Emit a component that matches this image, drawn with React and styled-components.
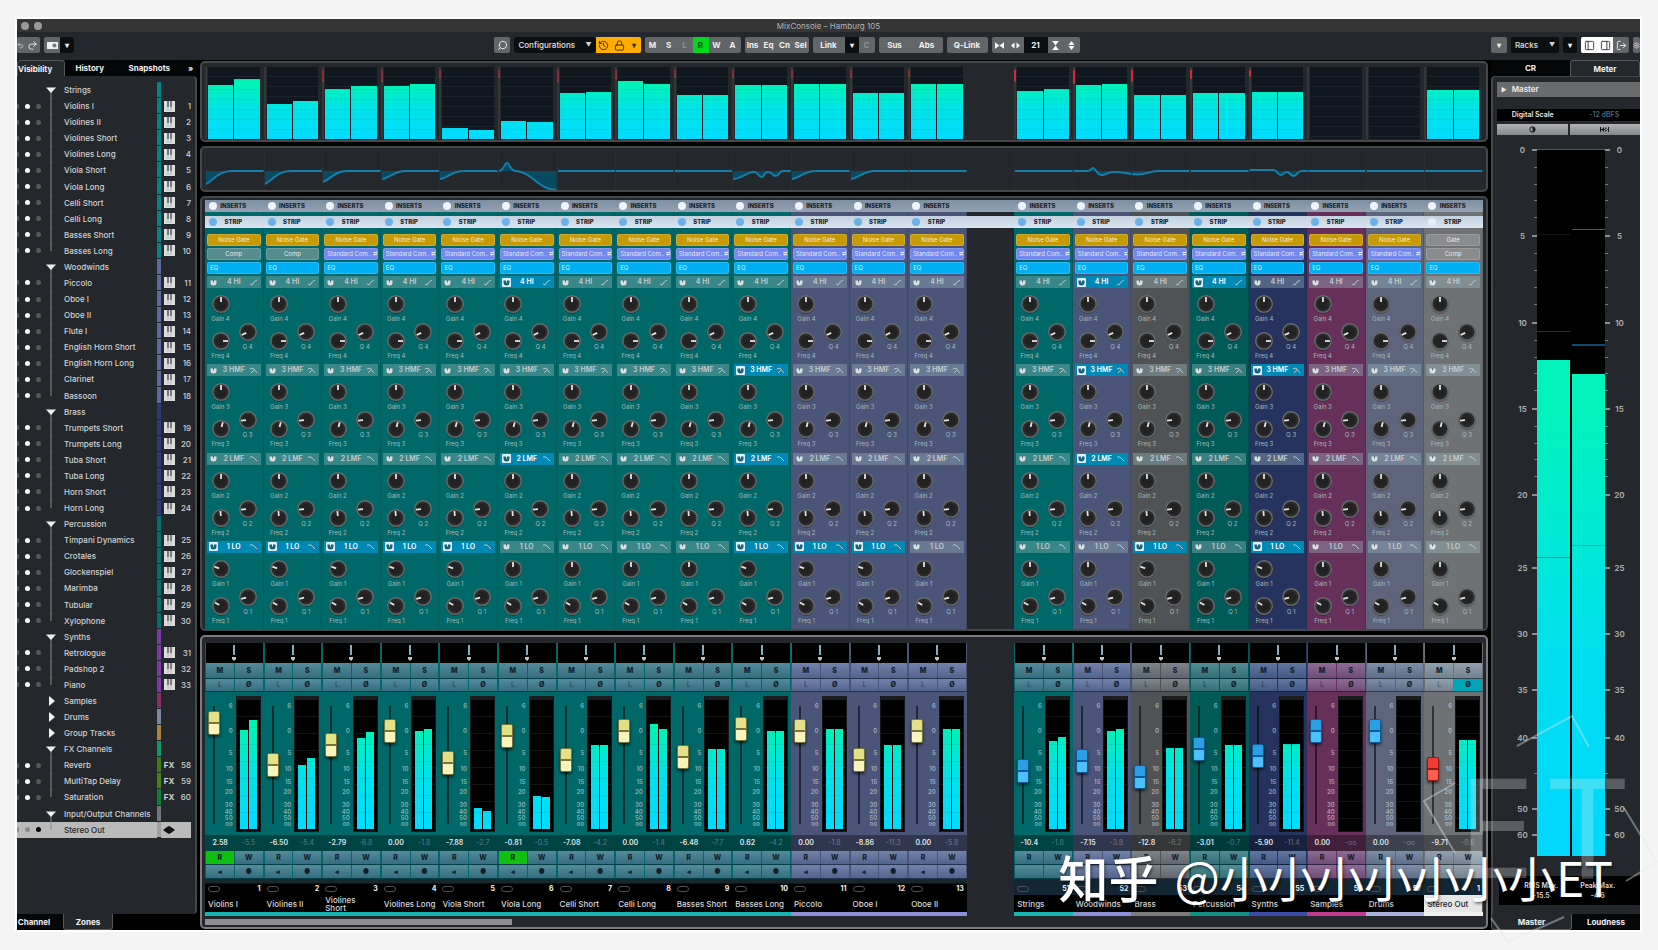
import React, { useState } from 'react';
import styled, { createGlobalStyle, css } from 'styled-components';
import { Search, Redo2, Undo2, PanelLeft, PanelRight, LogOut, Settings, History, Lock } from 'lucide-react';

const GlobalStyle = createGlobalStyle`
    * { box-sizing: border-box; }
    body {
        margin: 0;
        background: #f4f4f4;
        font-family: Inter, "Liberation Sans", sans-serif;
        font-size: 8px;
        line-height: 10px;
        color: #d4d6d8;
    }
    button, input, select { font: inherit; color: inherit; margin: 0; padding: 0; border: 0; }
`;

const Page = styled.div`
    position: relative;
    min-height: 100vh;
    display: flex;
    flex-direction: column;
    padding: 19px 18px 20px 17px;
    overflow: hidden;
`;
const Window = styled.div`
    flex: 1;
    display: flex;
    flex-direction: column;
    background: #000;
    box-shadow: 0 0 0 2px #fff;
    overflow: hidden;
`;

/* title bar and toolbar */
const TitleBar = styled.header`
    position: relative;
    display: flex;
    align-items: center;
    justify-content: center;
    height: 13px;
    background: #353535;
    color: #b4b4b4;
`;
const Lights = styled.div`
    position: absolute;
    left: 4px;
    display: flex;
    gap: 5px;
`;
const Light = styled.span`
    width: 8px;
    height: 8px;
    border-radius: 50%;
    background: #9a9a9a;
`;
const Toolbar = styled.div`
    display: flex;
    align-items: center;
    justify-content: space-between;
    height: 28px;
    padding-bottom: 2px;
    background: #24282c;
`;
const ToolSide = styled.div`
    display: flex;
    align-items: center;
    gap: 4px;
    padding-right: ${props => props.$pad || 0}px;
`;
const ToolGroup = styled.div`
    display: flex;
    height: 16px;
    border-radius: 2px;
    overflow: hidden;
    background: ${props => props.$bg || '#636669'};
`;
const ToolButton = styled.button`
    display: flex;
    align-items: center;
    justify-content: center;
    width: ${props => props.$w || 16}px;
    background: ${props => props.$bg || 'transparent'};
    color: ${props => props.$color || '#f0f0f0'};
    font-weight: 700;
    svg { width: 11px; height: 11px; }
`;
const ToolSelect = styled.select`
    width: ${props => props.$w}px;
    height: 16px;
    padding: 0 4px;
    background: #0c0f11;
    appearance: none;
    border-radius: 2px;
    color: #e2e2e2;
    font-weight: 500;
`;
const SelectBox = styled.label`
    display: flex;
    align-items: center;
    background: #0c0f11;
    border-radius: 2px;
    font-size: 6px;
    padding-right: 4px;
    select { font-size: 8px; }
`;

const Body = styled.div`
    flex: 1;
    display: flex;
    gap: 3px;
    background: #000;
`;

/* left zone */
const LeftZone = styled.aside`
    flex: 0 0 180px;
    display: flex;
    flex-direction: column;
`;
const Tabs = styled.nav`
    display: flex;
    height: 16px;
`;
const Tab = styled.button`
    flex: ${props => props.$grow || 0} 0 ${props => props.$w || 0}px;
    background: ${props => (props.$active ? '#24282c' : '#050607')};
    border: ${props => (props.$active ? '1px solid #55585b' : '0')};
    border-width: ${props => (props.$bottom ? '0 1px 1px' : '1px 1px 0')};
    border-radius: ${props => (props.$bottom ? '0 0 3px 3px' : '3px 3px 0 0')};
    padding-right: ${props => (props.$edge ? 12 : 0)}px;
    color: #f2f2f2;
    font-weight: 700;
`;
const ListPanel = styled.div`
    flex: 1;
    background: #24282c;
    border-right: 2px solid #45494c;
    border-radius: 0 4px 4px 0;
    padding: 6px 4px 0 0;
`;
const List = styled.ul`
    display: flex;
    flex-direction: column;
    height: 756px;
    margin: 0;
    padding: 0;
    list-style: none;
`;
const ListRow = styled.li`
    flex: 1;
    display: grid;
    grid-template-columns: 28px 19px 1fr 4px 16px 14px;
    align-items: center;
    background: ${props => (props.$selected ? '#bababa' : 'transparent')};
    color: ${props => (props.$selected ? '#26282a' : '#d0d2d4')};
    white-space: nowrap;
    font-weight: 500;
`;
const Dots = styled.span`
    display: flex;
    align-items: center;
    gap: 6px;
`;
const Dot = styled.i`
    width: ${props => props.$w || 5}px;
    height: 5px;
    border-radius: 3px;
    background: ${props => props.$c};
`;
const Tree = styled.span`
    display: flex;
    justify-content: flex-start;
    align-self: stretch;
    align-items: center;
    padding-left: 2px;
    svg { width: 10px; height: 16px; flex: none; overflow: visible; }
`;
const Swatch = styled.span`
    align-self: stretch;
    background: ${props => props.$c};
    border-bottom: 1px solid #1b2a30;
`;
const KindIcon = styled.span`
    display: flex;
    justify-content: center;
    font-weight: 700;
    font-size: 8px;
`;
const Num = styled.span`
    text-align: right;
`;

/* mixer panels */
const Mixer = styled.main`
    flex: 1;
    min-width: 0;
    display: flex;
    flex-direction: column;
    gap: 4px;
    padding: 1px 0;
`;
const Panel = styled.section`
    border: 2px solid ${props => props.$edge || '#45484b'};
    border-radius: 5px;
    background: #24282c;
    padding: ${props => props.$pad || '0 3px'};
    flex: ${props => (props.$grow ? '1 0 auto' : 'none')};
    display: flex;
    flex-direction: column;
`;
const Channels = styled.div`
    flex: 1 0 auto;
    display: grid;
    grid-template-columns: repeat(13, minmax(0, 1fr)) minmax(0, 0.81fr) repeat(8, minmax(0, 1fr));
    height: ${props => (props.$h ? props.$h + 'px' : 'auto')};
`;

const Overview = styled.div`
    display: flex;
    gap: 1px;
    padding-right: 4px;
    border-left: 2px solid #33373a;
`;
const PeakTick = styled.i`
    flex: none;
    align-self: flex-start;
    width: 2px;
    height: ${props => props.$h}px;
    margin: 3px 0 0 -2px;
    background: ${props => (props.$hot ? 'linear-gradient(#d42a40 70%, #7a4630)' : 'linear-gradient(#8a2c34 60%, #7a4630)')};
`;
const MiniMeter = styled.div`
    flex: 1;
    display: flex;
    align-items: flex-end;
    gap: 1px;
    background: repeating-linear-gradient(#10171e 0 9px, #1c242b 9px 10px);
`;
const Level = styled.i`
    flex: 1;
    background: ${props => `repeating-linear-gradient(to top, transparent 0 ${props.$step - 1}px, rgba(0, 110, 130, 0.13) ${props.$step - 1}px ${props.$step}px), linear-gradient(to top, #00dcff, #00e3e8 ${props.$full / 2}px, #00f5ac ${props.$full}px)`};
`;

const Curve = styled.svg`
    width: 100%;
    height: 42px;
    display: block;
    border-left: 1px solid #2a2e32;
`;

/* rack column */
const Rack = styled.div`
    display: flex;
    flex-direction: column;
    background: ${props => props.$c};
    border-right: 1px solid rgba(0, 0, 0, 0.12);
`;
const RackHead = styled.div`
    display: flex;
    align-items: center;
    height: 12px;
    padding: 0 14px 0 4px;
    margin-right: -1px;
    margin-bottom: ${props => (props.$strip ? 6 : 4)}px;
    background: ${props => (props.$strip ? 'linear-gradient(#c2d0df, #d9e5f0)' : 'linear-gradient(#7e8fa2, #94a3b4)')};
    color: #1c2126;
    font-size: 6px;
    font-weight: 800;
    span { flex: 1; text-align: center; }
`;
const Power = styled.i`
    width: 8px;
    height: 8px;
    border-radius: 50%;
    background: ${props => props.$c};
`;
const Slot = styled.button`
    display: block;
    height: 12px;
    line-height: 10px;
    margin: 0 2px 2px;
    padding: 0 2px;
    border: 1px solid rgba(255, 255, 255, 0.16);
    border-radius: 2px;
    background: ${props => props.$bg};
    color: rgba(255, 255, 255, 0.85);
    font-size: 6px;
    text-align: ${props => props.$align || 'center'};
    white-space: nowrap;
    overflow: hidden;
`;
const Band = styled.div`
    flex: 1 0 88px;
`;
const BandHead = styled.button`
    display: grid;
    grid-template-columns: 10px 1fr 10px;
    align-items: center;
    width: calc(100% - 4px);
    height: 12px;
    margin: 0 2px;
    padding: 0 2px;
    background: ${props => (props.$on ? '#0089b4' : 'rgba(160, 190, 200, 0.36)')};
    color: ${props => (props.$on ? '#fff' : '#c3cccf')};
    font-size: 7px;
    font-weight: 600;
    svg { width: 9px; height: 9px; }
`;
const Knobs = styled.div`
    display: flex;
    padding: 6px 0 0 2px;
`;
const KnobColumn = styled.div`
    display: flex;
    flex-direction: column;
    gap: 8px;
    width: 27px;
    padding-top: ${props => (props.$low ? 28 : 0)}px;
`;
const KnobBox = styled.div`
    display: flex;
    flex-direction: column;
    align-items: center;
    font-size: 6px;
    line-height: 9px;
    color: #a3b8bb;
    white-space: nowrap;
    svg { width: 20px; height: 20px; display: block; }
`;

/* fader strip */
const Strip = styled.div`
    display: flex;
    flex-direction: column;
    background: ${props => props.$c};
`;
const Pan = styled.div`
    display: flex;
    justify-content: center;
    height: 20px;
    margin: 0 1px;
    background: #000;
    svg { width: 6px; height: 19px; }
`;
const ButtonPair = styled.div`
    display: grid;
    grid-template-columns: 1fr 1fr;
    gap: 1px;
    height: ${props => props.$h}px;
    padding: 0 1px;
    border-bottom: 1px solid rgba(0, 20, 40, 0.5);
`;
const PadButton = styled.button`
    background: ${props => (props.$on ? props.$on : css`linear-gradient(rgba(255,255,255,0.12), rgba(0,0,0,0.12)), ${props.$c}`)};
    color: ${props => (props.$dim ? 'rgba(0,0,0,0.3)' : '#10202a')};
    font-size: 7px;
    line-height: 8px;
    font-weight: 800;
`;
const FaderArea = styled.div`
    display: flex;
    height: 143px;
    padding: 4px 3px 3px;
`;
const Fader = styled.input.attrs({ type: 'range', min: 0, max: 110 })`
    writing-mode: vertical-lr;
    direction: rtl;
    appearance: none;
    width: 12px;
    height: 134px;
    margin: 2px 0 0;
    background: linear-gradient(rgba(0, 0, 0, 0.55), rgba(0, 0, 0, 0.55)) center / 2px 118px no-repeat;
    &::-webkit-slider-thumb {
        appearance: none;
        width: 12px;
        height: 24px;
        border: 1px solid ${props => props.$cap[2]};
        border-radius: 2px;
        background: linear-gradient(${props => `${props.$cap[0]} 45%, ${props.$cap[2]} 46% 54%, ${props.$cap[1]} 55%`});
        box-shadow: 0 2px 3px rgba(0, 0, 0, 0.6);
    }
`;
const Scale = styled.div`
    flex: 1;
    padding: 7px 3px 0 0;
    text-align: right;
    font-size: 6px;
    line-height: 6px;
    font-weight: 600;
    color: rgba(220, 230, 232, 0.6);
`;
const Mark = styled.div`
    height: ${props => props.$h}px;
`;
const Meter = styled.div`
    flex: none;
    display: flex;
    align-items: flex-end;
    gap: 1px;
    width: 25px;
    padding: 3px 3px 2px;
    background: repeating-linear-gradient(#000 0 16px, #141414 16px 17px);
    border: 1px solid #10181a;
    border-top: 4px solid #1b1d1f;
`;
const Values = styled.div`
    display: grid;
    grid-template-columns: 1fr 1fr;
    height: 16px;
    padding: 0 1px;
    background: rgba(0, 0, 0, 0.35);
    line-height: 15px;
    text-align: center;
    font-weight: 600;
    color: #dfe8ea;
    font-size: 7px;
    span { color: rgba(210, 225, 230, 0.4); font-weight: 400; }
`;
const StripHead = styled.div`
    display: flex;
    align-items: center;
    justify-content: space-between;
    height: 16px;
    padding: 4px 3px 0;
    background: ${props => (props.$group ? '#142634' : 'linear-gradient(#17282c 4px, #000 5px)')};
    color: #f2f2f2;
    font-size: 7px;
    font-weight: 700;
`;
const Link = styled.i`
    width: 12px;
    height: 6px;
    border: 1px solid #4c5154;
    border-radius: 3px;
`;
const StripName = styled.div`
    display: flex;
    align-items: center;
    height: 17px;
    padding: 0 ${props => (props.$wrap ? 12 : 0)}px 0 3px;
    background: ${props => (props.$selected ? '#e6e6e6' : '#000')};
    color: ${props => (props.$selected ? '#222' : '#d8d8d8')};
    border-right: 1px solid rgba(0, 0, 0, 0.6);
    line-height: 8px;
    font-weight: 500;
    white-space: ${props => (props.$wrap ? 'normal' : 'nowrap')};
`;
const StripLine = styled.div`
    height: 4px;
    background: ${props => props.$c};
`;
const Scrollbar = styled.div`
    height: 6px;
    margin-top: 3px;
    width: 24%;
    background: #8f8e96;
`;

/* right zone */
const RightZone = styled.aside`
    flex: 0 0 149px;
    display: flex;
    flex-direction: column;
`;
const MeterPanel = styled.div`
    flex: 1;
    display: flex;
    flex-direction: column;
    background: #24282c;
    border: 2px solid #45484b;
    border-width: 1px 0 0 2px;
    border-radius: 4px 0 0 0;
    padding: 5px 0 0 4px;
`;
const MasterBar = styled.div`
    height: 15px;
    padding-left: 4px;
    line-height: 15px;
    background: #6a6b6d;
    color: #ececec;
    font-weight: 600;
    span { font-size: 6px; margin-right: 5px; }
`;
const ScaleType = styled.div`
    display: grid;
    grid-template-columns: 1fr 1fr;
    align-items: center;
    text-align: center;
    height: 12px;
    margin-top: 12px;
    background: #000;
    color: #e8e8e8;
    font-size: 7px;
    font-weight: 600;
    span { color: #4d6a7c; }
`;
const MeterButtons = styled.div`
    display: grid;
    grid-template-columns: 1fr 1fr;
    gap: 2px;
    height: 11px;
    margin: 3px 0 14px;
`;
const MeterButton = styled.button`
    display: flex;
    align-items: center;
    justify-content: center;
    background: linear-gradient(#b0b2b4, #85888a);
    svg { width: 9px; height: 7px; }
`;
const MasterMeter = styled.div`
    display: flex;
`;
const BigScale = styled.div`
    flex: 0 0 ${props => (props.$right ? 35 : 40)}px;
    color: #b0b2b3;
    font-weight: 600;
`;
const BigMark = styled.div`
    display: flex;
    flex-direction: ${props => (props.$right ? 'row' : 'row-reverse')};
    height: ${props => props.$h}px;
    span { width: 17px; margin-top: -3px; line-height: 8px; text-align: center; }
`;
const Ticks = styled.div`
    width: 6px;
    display: flex;
    flex-direction: column;
    justify-content: space-between;
    align-items: ${props => (props.$right ? 'flex-start' : 'flex-end')};
    i { width: 3px; height: 1px; background: #777a7c; }
    i:first-child { width: 5px; height: 2px; background: #8c8f91; }
    i:last-child { background: none; }
`;
const BigBars = styled.div`
    position: relative;
    flex: 0 0 68px;
    display: flex;
    align-items: flex-end;
    gap: 2px;
    background: #000;
    border-top: 1px solid #55585a;
`;
const BigBar = styled.i`
    flex: 1;
    height: ${props => props.$h}px;
    background: linear-gradient(to top, #00d8ff, #00dfef 200px, #00e8da 300px, #00f4bb 450px);
`;
const Hold = styled.i`
    position: absolute;
    top: ${props => props.$top}px;
    left: ${props => (props.$right ? 35 : 0)}px;
    width: 33px;
    height: ${props => props.$h || 1}px;
    background: ${props => props.$c};
`;
const Readout = styled.div`
    display: grid;
    grid-template-columns: 1fr 1fr;
    margin: auto 0 9px 2px;
    padding: 5px 14px 4px;
    background: #000;
    text-align: center;
    color: #dcdcdc;
    font-size: 7px;
    font-weight: 600;
    white-space: nowrap;
`;

/* watermark over the window */
const Signature = styled.div`
    position: absolute;
    right: 45px;
    bottom: 46px;
    display: flex;
    align-items: center;
    gap: 16px;
    font-family: "Noto Sans CJK SC", sans-serif;
    font-size: 48px;
    line-height: 56px;
    color: #fff;
    text-shadow: 1px 2px 3px rgba(0, 0, 0, 0.5);
    white-space: nowrap;
    b { font-size: 50px; font-weight: 500; }
`;
const Ghost = styled.svg`
    position: absolute;
    right: 0;
    bottom: 0;
    width: 250px;
    height: 240px;
    fill: none;
    stroke: rgba(225, 235, 238, 0.4);
    stroke-width: 2;
`;
const GhostText = styled.div`
    position: absolute;
    right: 32px;
    bottom: 66px;
    display: flex;
    gap: 14px;
    font-family: "Open Sans", sans-serif;
    font-size: 140px;
    line-height: 120px;
    color: rgba(225, 235, 238, 0.28);
`;

const TEAL = { bg: '#006868', pad: '#3c7c90', line: '#14b4b0' };
const VIOLET = { bg: '#4b5479', pad: '#5f719f', line: '#8a8fd6' };
const GREY = { bg: '#505355', pad: '#6c757c', line: '#7c7c7c' };
const GREEN = { bg: '#005a58', pad: '#3a7c86', line: '#129084' };
const NAVY = { bg: '#26335e', pad: '#4d6496', line: '#3a4aa6' };
const PLUM = { bg: '#66305a', pad: '#7f5688', line: '#c03a8e' };
const SLATE = { bg: '#5d647c', pad: '#6c7d9c', line: '#a8b0dc' };
const MASTER = { bg: '#6f7274', pad: '#8494a4', line: '#f0f0f0' };

const CURVE = {
    flat: 'M0 23 H58',
    a: 'M0 36 C8 32 12 23 26 23 H58',
    b: 'M0 34 C8 31 12 23 24 23 H58',
    c: 'M0 31 C10 29 12 23 24 23 H58',
    shelf: 'M0 23 C4 23 6 15 8 15 C11 15 11 23 17 23 C34 24 38 41 58 42',
    dips: 'M0 31 C8 31 14 24 21 24 C26 24 25 29 29 29 C32 29 31 24 35 24 C40 24 39 28 43 28 C47 28 46 23 50 23 H58',
    bump: 'M0 23 H14 C17 23 17 20 19 20 C22 20 23 27 28 27 C33 27 32 24 40 24 C50 24 50 25 58 26',
    scoop: 'M0 26 C14 28 16 23 26 23 H58',
    late: 'M0 22 H24 C28 22 27 27 31 27 C34 27 34 24 37 24 C40 24 41 28 44 28 C47 28 48 23 52 23 H58',
};

// mini = overview meter, meter = fader meter, on = active EQ bands
const channels = [
    { name: 'Violins I', t: TEAL, mini: [54, 60], meter: [99, 109], fader: 97, val: '2.58', peak: '-5.5', curve: 'a', on: [1], comp: true, rec: true, red: 0 },
    { name: 'Violines II', t: TEAL, mini: [35, 38], meter: [64, 71], fader: 55, val: '-6.50', peak: '-5.4', curve: 'a', on: [1], comp: true, red: 0 },
    { name: 'Violines Short', wrap: true, t: TEAL, mini: [50, 53], meter: [91, 97], fader: 75, val: '-2.79', peak: '-6.8', curve: 'b', on: [1], red: 12 },
    { name: 'Violines Long', t: TEAL, mini: [53, 55], meter: [98, 100], fader: 89, val: '0.00', peak: '-1.8', curve: 'c', on: [1], red: 12 },
    { name: 'Viola Short', t: TEAL, mini: [11, 9], meter: [21, 18], fader: 57, val: '-7.88', peak: '-2.7', curve: 'c', on: [1], red: 8 },
    { name: 'Viola Long', t: TEAL, mini: [18, 17], meter: [33, 32], fader: 84, val: '-0.81', peak: '-0.5', curve: 'shelf', on: [4, 2], rec: true, red: 8 },
    { name: 'Celli Short', t: TEAL, mini: [46, 47], meter: [84, 84], fader: 60, val: '-7.08', peak: '-4.2', curve: 'flat', on: [], red: 12 },
    { name: 'Celli Long', t: TEAL, mini: [58, 55], meter: [105, 100], fader: 89, val: '0.00', peak: '-1.4', curve: 'flat', on: [], red: 9 },
    { name: 'Basses Short', t: TEAL, mini: [44, 44], meter: [80, 80], fader: 63, val: '-6.48', peak: '-7.7', curve: 'flat', on: [], red: 8 },
    { name: 'Basses Long', t: TEAL, mini: [54, 54], meter: [98, 98], fader: 91, val: '0.62', peak: '-4.2', curve: 'dips', on: [3, 2, 1], red: 8 },
    { name: 'Piccolo', t: VIOLET, mini: [55, 55], meter: [100, 100], fader: 89, val: '0.00', peak: '-1.8', curve: 'c', on: [1], red: 8 },
    { name: 'Oboe I', t: VIOLET, mini: [46, 46], meter: [84, 84], fader: 60, val: '-8.86', peak: '-11.3', curve: 'c', on: [1], red: 8 },
    { name: 'Oboe II', t: VIOLET, mini: [55, 55], meter: [100, 100], fader: 89, val: '0.00', peak: '-5.8', curve: 'flat', on: [], red: 7 },
    null,
    { name: 'Strings', num: 51, group: true, t: TEAL, mini: [48, 50], meter: [88, 92], fader: 49, val: '-10.4', peak: '-1.8', curve: 'flat', on: [], red: 12 },
    { name: 'Woodwinds', num: 52, group: true, t: VIOLET, mini: [54, 55], meter: [98, 100], fader: 59, val: '-7.15', peak: '-3.8', curve: 'bump', on: [4, 3, 2], red: 14 },
    { name: 'Brass', num: 53, group: true, t: GREY, mini: [44, 44], meter: [81, 81], fader: 43, val: '-12.8', peak: '-6.2', curve: 'scoop', on: [1], red: 12 },
    { name: 'Percussion', num: 54, group: true, t: GREEN, mini: [46, 46], meter: [84, 84], fader: 71, val: '-3.01', peak: '-0.7', curve: 'flat', on: [4], red: 9 },
    { name: 'Synths', num: 55, group: true, t: NAVY, mini: [47, 47], meter: [85, 85], fader: 64, val: '-5.90', peak: '-11.4', curve: 'late', on: [3, 1], red: 7 },
    { name: 'Samples', num: 56, group: true, t: PLUM, mini: [0, 0], meter: [0, 0], fader: 89, val: '0.00', peak: '-oo', curve: 'flat', on: [], red: 0 },
    { name: 'Drums', num: 57, group: true, t: SLATE, mini: [0, 0], meter: [0, 0], fader: 89, val: '0.00', peak: '-oo', curve: 'flat', on: [], red: 0 },
    { name: 'Stereo Out', num: 1, group: true, out: true, t: MASTER, mini: [49, 49], meter: [89, 89], fader: 51, val: '-9.71', peak: '-0.6', curve: 'flat', on: [], comp: true, red: 0 },
];

const bands = [
    { n: 4, label: '4 HI', turn: [0, 90, -115], slope: 'M1 6 L3 7 L5 4 L8 2' },
    { n: 3, label: '3 HMF', turn: [0, 15, -95], slope: 'M1 3 L4 2 L8 7 M2 7 L5 4' },
    { n: 2, label: '2 LMF', turn: [0, -5, -95], slope: 'M1 3 L4 3 L8 7' },
    { n: 1, label: '1 LO', turn: [-70, -60, -105], slope: 'M1 3 L4 3 L8 7' },
];

const folders = [
    { name: 'Strings', c: '#008484', rows: ['Violins I', 'Violines II', 'Violines Short', 'Violines Long', 'Viola Short', 'Viola Long', 'Celli Short', 'Celli Long', 'Basses Short', 'Basses Long'], from: 1 },
    { name: 'Woodwinds', c: '#5b6b9e', rows: ['Piccolo', 'Oboe I', 'Oboe II', 'Flute I', 'English Horn Short', 'English Horn Long', 'Clarinet', 'Bassoon'], from: 11 },
    { name: 'Brass', c: '#2c3b78', rows: ['Trumpets Short', 'Trumpets Long', 'Tuba Short', 'Tuba Long', 'Horn Short', 'Horn Long'], from: 19 },
    { name: 'Percussion', c: '#00706c', rows: ['Timpani Dynamics', 'Crotales', 'Glockenspiel', 'Marimba', 'Tubular', 'Xylophone'], from: 25 },
    { name: 'Synths', c: '#8038a8', rows: ['Retrologue', 'Padshop 2', 'Piano'], from: 31 },
    { name: 'Samples', c: '#8c2c66', closed: true, rows: [] },
    { name: 'Drums', c: '#7c889f', closed: true, rows: [] },
    { name: 'Group Tracks', c: '#a88440', closed: true, rows: [] },
    { name: 'FX Channels', c: '#0c9a66', rows: ['Reverb', 'MultiTap Delay', 'Saturation'], fx: ['#3c7c10', '#4c8010', '#0c8030'], from: 58 },
    { name: 'Input/Output Channels', c: '#74777a', rows: ['Stereo Out'], io: true },
];

const faderMarks = [['6', 25], ['0', 22], ['5', 16], ['10', 13], ['15', 10], ['20', 13], ['30', 7], ['40', 6], ['50', 6], ['oo', 6]];
const masterMarks = [['0', 86], ['5', 87], ['10', 86], ['15', 86], ['20', 73], ['25', 66], ['30', 56], ['35', 48], ['40', 71], ['50', 26], ['60', 22]];

const YELLOW_CAP = ['#e4e088', '#f8f4bc', '#77743c'];
const BLUE_CAP = ['#2a9fe4', '#4cc0f8', '#0e5b98'];
const RED_CAP = ['#f03c34', '#ff5c50', '#8c1a18'];

const Keys = () => (
    <svg width="11" height="11" viewBox="0 0 11 11">
        <rect width="11" height="11" fill="#dcdcdc" />
        <path d="M3 0h2v6H3zM6 0h2v6H6z" fill="#77797b" />
        <path d="M4 6v4M7 6v4" stroke="#b4b6b8" />
    </svg>
);

const TreeMark = ({ kind, last }) => (
    <svg viewBox="0 0 10 16">
        {kind === 'open' && <path d="M4 8V17" stroke="#86898b" />}
        {kind === 'open' && <path d="M-1 5.500h10L4 11z" fill="#f0f0f0" />}
        {kind === 'closed' && <path d="M2 3v10l6-5z" fill="#f0f0f0" />}
        {kind === 'row' && <path d={last ? 'M4 0V8' : 'M4 0V17'} stroke="#86898b" />}
    </svg>
);

const Knob = ({ label, turn }) => (
    <KnobBox>
        <svg viewBox="0 0 20 20" role="img" aria-label={label}>
            <circle cx="10" cy="11" r="9" fill="rgba(0,0,0,0.3)" />
            <circle cx="10" cy="10" r="8.300" fill="#2c2b2c" stroke="#666a6b" strokeWidth="1.500" />
            <circle cx="10" cy="10" r="5.500" fill="#232223" />
            <path d="M10 3V8" stroke="#e4e4e4" strokeWidth="1.800" transform={`rotate(${turn} 10 10)`} />
        </svg>
        {label}
    </KnobBox>
);

const compColor = ch => {
    if (ch.out) return '#898b8d';
    return ch.comp ? '#568c8e' : '#7288ee';
};

const RackColumn = ({ ch }) => (
    <Rack $c={ch.t.bg}>
        <RackHead><Power $c="#eef4fa" /><span>INSERTS</span></RackHead>
        <RackHead $strip><Power $c={ch.out ? '#e4ecf4' : '#6cb2e8'} /><span>STRIP</span></RackHead>
        <Slot $bg={ch.out ? '#898b8d' : '#c69a06'}>{ch.out ? 'Gate' : 'Noise Gate'}</Slot>
        <Slot $bg={compColor(ch)}>{ch.comp ? 'Comp' : 'Standard Com.. ⇄'}</Slot>
        <Slot $bg="#00aef4" $align="left">EQ</Slot>
        {bands.map(b => {
            const on = ch.on.includes(b.n);
            return (
                <Band key={b.n}>
                    <BandHead $on={on}>
                        <svg viewBox="0 0 9 9">
                            {on && <rect width="9" height="9" rx="1" fill="#dff2fa" />}
                            <path d="M1.500 2.500h6v2a3 3 0 0 1-6 0z" fill={on ? '#17607c' : '#dbe2e4'} />
                            <path d="M4.500 2v2.500" stroke={on ? '#dff2fa' : '#5a7478'} />
                        </svg>
                        <span>{b.label}</span>
                        <svg viewBox="0 0 9 9"><path d={b.slope} fill="none" stroke="#b4c8cc" /></svg>
                    </BandHead>
                    <Knobs>
                        <KnobColumn>
                            <Knob label={`Gain ${b.n}`} turn={b.n === 1 && !on ? 0 : b.turn[0]} />
                            <Knob label={`Freq ${b.n}`} turn={b.turn[1]} />
                        </KnobColumn>
                        <KnobColumn $low>
                            <Knob label={`Q ${b.n}`} turn={b.turn[2]} />
                        </KnobColumn>
                    </Knobs>
                </Band>
            );
        })}
    </Rack>
);

const FaderStrip = ({ ch, num }) => {
    const [level, setLevel] = useState(ch.fader);
    const cap = ch.out ? RED_CAP : ch.group ? BLUE_CAP : YELLOW_CAP;
    const pad = ch.t.pad;
    return (
        <Strip $c={ch.t.bg}>
            <Pan>
                <svg viewBox="0 0 6 19">
                    <path d="M3 2V12" stroke="#86aebd" strokeWidth="2" />
                    <path d="M1 14h4v2l-2 2-2-2z" fill="#c4c4c4" />
                </svg>
            </Pan>
            <ButtonPair $h={16}>
                <PadButton $c={pad}>M</PadButton>
                <PadButton $c={pad}>S</PadButton>
            </ButtonPair>
            <ButtonPair $h={13}>
                <PadButton $c={pad} $dim>L</PadButton>
                <PadButton $c={pad} $on={ch.out ? '#00a6b6' : null}>Ø</PadButton>
            </ButtonPair>
            <FaderArea>
                <Fader $cap={cap} aria-label={`${ch.name} volume`} value={level} onChange={e => setLevel(Number(e.target.value))} />
                <Scale>
                    {faderMarks.map(([text, h]) => <Mark key={text} $h={h}>{text}</Mark>)}
                </Scale>
                <Meter>
                    {ch.meter.map((h, i) => <Level key={i} $step={17} $full={110} style={{ height: h }} />)}
                </Meter>
            </FaderArea>
            <Values>{ch.val}<span>{ch.peak}</span></Values>
            <ButtonPair $h={14}>
                <PadButton $c={pad} $on={ch.rec ? '#10c010' : null}>R</PadButton>
                <PadButton $c={pad}>W</PadButton>
            </ButtonPair>
            <ButtonPair $h={14}>
                <PadButton $c={pad}>{ch.group ? '' : '◂'}</PadButton>
                <PadButton $c={pad}>{ch.group ? '' : '●'}</PadButton>
            </ButtonPair>
            <StripHead $group={ch.group}><Link />{num}</StripHead>
            <StripName $selected={ch.out} $wrap={ch.wrap}>{ch.name}</StripName>
            <StripLine $c={ch.t.line} />
        </Strip>
    );
};

const VisibilityList = () => (
    <List>
        {folders.map(f => (
            <React.Fragment key={f.name}>
                <ListRow>
                    <span />
                    <Tree><TreeMark kind={f.closed ? 'closed' : 'open'} /></Tree>
                    <span>{f.name}</span>
                    <Swatch $c={f.c} />
                </ListRow>
                {f.rows.map((name, i) => (
                    <ListRow key={name} $selected={f.io}>
                        <Dots>
                            <Dot $w={2} $c={f.io ? '#8a8a8a' : '#55595c'} />
                            <Dot $c={f.io ? '#8a8a8a' : '#fff'} />
                            <Dot $c={f.io ? '#000' : '#55595c'} />
                        </Dots>
                        <Tree><TreeMark kind="row" last={i === f.rows.length - 1} /></Tree>
                        <span>{name}</span>
                        <Swatch $c={f.fx ? f.fx[i] : f.io ? '#a0a0a0' : f.c} />
                        <KindIcon>
                            {f.fx ? 'FX' : f.io
                                ? <svg width="12" height="8" viewBox="0 0 12 8"><path d="M0 4l4-3 2-1 2 1 4 3-4 3-2 1-2-1z" fill="#151515" /></svg>
                                : <Keys />}
                        </KindIcon>
                        <Num>{f.io ? '' : f.from + i}</Num>
                    </ListRow>
                ))}
            </React.Fragment>
        ))}
    </List>
);

const tickCount = (text, h) => {
    if (h > 80) return 6;
    return text === '40' ? 3 : 2;
};

const BigScaleSide = ({ right }) => (
    <BigScale $right={right}>
        {masterMarks.map(([text, h]) => (
            <BigMark key={text} $h={h} $right={right}>
                <Ticks $right={right}>
                    {Array.from({ length: tickCount(text, h) }, (_, i) => <i key={i} />)}
                </Ticks>
                <span>{text}</span>
            </BigMark>
        ))}
    </BigScale>
);

const App = () => (
    <Page>
        <GlobalStyle />
        <Window>
            <TitleBar>
                <Lights><Light /><Light /></Lights>
                MixConsole – Hamburg 105
            </TitleBar>
            <Toolbar>
                <ToolSide $pad={9}>
                    <ToolGroup>
                        <ToolButton $w={7} aria-label="Undo"><Undo2 /></ToolButton>
                        <ToolButton aria-label="Redo"><Redo2 /></ToolButton>
                    </ToolGroup>
                    <ToolGroup>
                        <ToolButton aria-label="Snapshot">
                            <svg viewBox="0 0 11 11"><path d="M0 2h11v7H0z" fill="#f0f0f0" /><circle cx="7.500" cy="5.500" r="2" fill="#777" /></svg>
                        </ToolButton>
                        <ToolButton $bg="#0c0f11" $w={14}>▾</ToolButton>
                    </ToolGroup>
                </ToolSide>
                <ToolSide>
                    <ToolGroup><ToolButton aria-label="Search"><Search style={{ transform: 'scaleX(-1)' }} /></ToolButton></ToolGroup>
                    <ToolGroup>
                        <SelectBox>
                            <ToolSelect $w={71} aria-label="Configurations"><option>Configurations</option></ToolSelect>▼
                        </SelectBox>
                        <ToolButton $bg="#ffae00" $color="#3a2a00" aria-label="Undo history"><History /></ToolButton>
                        <ToolButton $bg="#ffae00" $color="#3a2a00" aria-label="Lock"><Lock /></ToolButton>
                        <ToolButton $bg="#ffae00" $color="#3a2a00" $w={13}>▾</ToolButton>
                    </ToolGroup>
                    <ToolGroup>
                        <ToolButton>M</ToolButton>
                        <ToolButton>S</ToolButton>
                        <ToolButton $color="#909395">L</ToolButton>
                        <ToolButton $bg="#00d820" $color="#0a4a10">R</ToolButton>
                        <ToolButton>W</ToolButton>
                        <ToolButton>A</ToolButton>
                    </ToolGroup>
                    <ToolGroup>
                        <ToolButton>Ins</ToolButton>
                        <ToolButton>Eq</ToolButton>
                        <ToolButton>Cn</ToolButton>
                        <ToolButton>Sel</ToolButton>
                    </ToolGroup>
                    <ToolGroup>
                        <ToolButton $w={32}>Link</ToolButton>
                        <ToolButton $w={14} $bg="#0c0f11">▾</ToolButton>
                        <ToolButton $color="#909395">C</ToolButton>
                    </ToolGroup>
                    <ToolGroup>
                        <ToolButton $w={32}>Sus</ToolButton>
                        <ToolButton $w={32}>Abs</ToolButton>
                    </ToolGroup>
                    <ToolGroup><ToolButton $w={41}>Q-Link</ToolButton></ToolGroup>
                    <ToolGroup>
                        <ToolButton aria-label="Narrower"><svg viewBox="0 0 11 11"><path d="M1 2.500h1v6H1zM9 2.500h1v6H9zM2 3l3.500 2.500L2 8zM9 3L5.500 5.500 9 8z" fill="#fff" /></svg></ToolButton>
                        <ToolButton aria-label="Wider"><svg viewBox="0 0 11 11"><path d="M4.500 2.500v6L1 5.500zM6.500 2.500v6L10 5.500z" fill="#fff" /></svg></ToolButton>
                        <ToolButton $w={24} $bg="#0c0f11">21</ToolButton>
                        <ToolButton aria-label="Shorter"><svg viewBox="0 0 11 11"><path d="M2.500 1h6v1h-6zM2.500 9h6v1h-6zM3 2h5L5.500 5.500zM3 9h5L5.500 5.500z" fill="#fff" /></svg></ToolButton>
                        <ToolButton aria-label="Taller"><svg viewBox="0 0 11 11"><path d="M2.500 5L5.500 1 8.500 5zM2.500 6l3 4 3-4z" fill="#fff" /></svg></ToolButton>
                    </ToolGroup>
                </ToolSide>
                <ToolSide>
                    <ToolGroup><ToolButton>▾</ToolButton></ToolGroup>
                    <SelectBox>
                        <ToolSelect $w={38} aria-label="Racks"><option>Racks</option></ToolSelect>▼
                    </SelectBox>
                    <ToolGroup><ToolButton $w={14} $bg="#0c0f11">▾</ToolButton></ToolGroup>
                    <ToolGroup>
                        <ToolButton $bg="#fff" $color="#333" aria-label="Left zone"><PanelLeft /></ToolButton>
                        <ToolButton $bg="#fff" $color="#333" aria-label="Right zone"><PanelRight /></ToolButton>
                        <ToolButton aria-label="Layout"><LogOut /></ToolButton>
                    </ToolGroup>
                    <ToolGroup><ToolButton $w={7} aria-label="Setup"><Settings /></ToolButton></ToolGroup>
                </ToolSide>
            </Toolbar>
            <Body>
                <LeftZone>
                    <Tabs>
                        <Tab $w={48} $active $edge>Visibility</Tab>
                        <Tab $w={49}>History</Tab>
                        <Tab $w={70}>Snapshots</Tab>
                        <Tab $grow={1}>»</Tab>
                    </Tabs>
                    <ListPanel><VisibilityList /></ListPanel>
                    <Tabs>
                        <Tab $w={46} $bottom $edge>Channel</Tab>
                        <Tab $w={50} $bottom $active>Zones</Tab>
                    </Tabs>
                </LeftZone>
                <Mixer>
                    <Panel $pad="4px 3px 1px">
                        <Channels $h={72}>
                            {channels.map((ch, i) => (ch ? (
                                <Overview key={ch.name}>
                                    <PeakTick $h={ch.red} $hot={ch.group} />
                                    <MiniMeter>
                                        {ch.mini.map((h, n) => <Level key={n} $step={10} $full={60} style={{ height: h }} />)}
                                    </MiniMeter>
                                </Overview>
                            ) : <div key={i} />))}
                        </Channels>
                    </Panel>
                    <Panel>
                        <Channels>
                            {channels.map((ch, i) => (ch ? (
                                <Curve key={ch.name} viewBox="0 0 58 42" preserveAspectRatio="none">
                                    <path d={`${CURVE[ch.curve]} V23 H0 Z`} fill="#0a4a60" />
                                    <path d={CURVE[ch.curve]} fill="none" stroke="#127fac" strokeWidth="2" />
                                </Curve>
                            ) : <div key={i} />))}
                        </Channels>
                    </Panel>
                    <Panel $grow $pad="2px 3px 0">
                        <Channels>
                            {channels.map((ch, i) => (ch ? <RackColumn key={ch.name} ch={ch} /> : (
                                <Rack key={i} $c="#24282c"><RackHead /><RackHead $strip /></Rack>
                            )))}
                        </Channels>
                    </Panel>
                    <Panel $edge="#7c7c80" $pad="6px 3px 2px">
                        <Channels>
                            {channels.map((ch, i) => (ch ? <FaderStrip key={ch.name} ch={ch} num={ch.num || i + 1} /> : <div key={i} />))}
                        </Channels>
                        <Scrollbar />
                    </Panel>
                </Mixer>
                <RightZone>
                    <Tabs>
                        <Tab $w={79}>CR</Tab>
                        <Tab $grow={1} $active>Meter</Tab>
                    </Tabs>
                    <MeterPanel>
                        <MasterBar><span>▶</span>Master</MasterBar>
                        <ScaleType>Digital Scale<span>-12 dBFS</span></ScaleType>
                        <MeterButtons>
                            <MeterButton aria-label="Hold">
                                <svg viewBox="0 0 9 7"><circle cx="4.500" cy="3.500" r="2.700" fill="none" stroke="#16181a" /><path d="M4.500 1a2.500 2.500 0 0 1 0 5z" fill="#16181a" /></svg>
                            </MeterButton>
                            <MeterButton aria-label="Width">
                                <svg viewBox="0 0 9 7"><path d="M0 1h1v5H0zM8 1h1v5H8zM1 3h7v1H1zM4 1v5L1.500 3.500zM5 1v5l2.500-2.500z" fill="#16181a" /></svg>
                            </MeterButton>
                        </MeterButtons>
                        <MasterMeter>
                            <BigScaleSide />
                            <BigBars>
                                <BigBar $h={496} />
                                <BigBar $h={482} />
                                <Hold $top={84} $c="#161616" />
                                <Hold $top={79} $c="#505050" $right />
                                <Hold $top={181} $c="#0b3a5c" />
                                <Hold $top={194} $c="#0d4a74" $h={2} $right />
                                <Hold $top={407} $c="#009c98" />
                                <Hold $top={395} $c="#00b8b4" $right />
                            </BigBars>
                            <BigScaleSide right />
                        </MasterMeter>
                        <Readout>
                            <span>RMS Max.</span><span>Peak Max.</span>
                            <span>-15.5</span><span>-4.6</span>
                        </Readout>
                    </MeterPanel>
                    <Tabs>
                        <Tab $w={81} $bottom $active>Master</Tab>
                        <Tab $grow={1} $bottom>Loudness</Tab>
                    </Tabs>
                </RightZone>
            </Body>
        </Window>
        <Ghost viewBox="0 0 250 240">
            <path d="M109 36L164 6 181 37M47 73L16 91 47 143M216 98L249 152 218 171M83 208L100 232 156 207" />
        </Ghost>
        <GhostText aria-hidden="true"><span>E</span><span>T</span></GhostText>
        <Signature><b>知乎</b><span>@小小小小小小小ET</span></Signature>
    </Page>
);

export default App;
